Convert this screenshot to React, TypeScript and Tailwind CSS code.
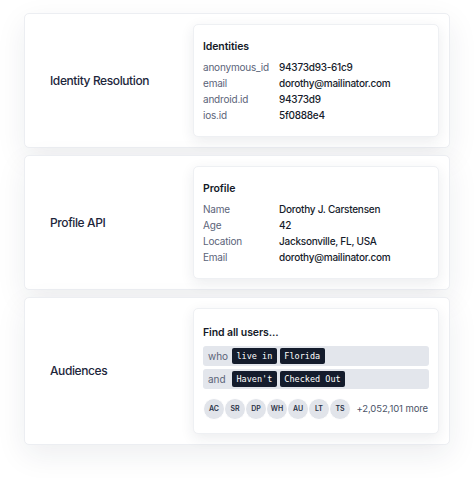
import React from "react";

const font = { fontFamily: "Inter, 'Liberation Sans', sans-serif" };
const mono = { fontFamily: "'DejaVu Sans Mono', 'Liberation Mono', monospace" };

function Row({ k, v }: { k: string; v: string }) {
  return (
    <div className="flex h-[16px] items-center">
      <span className="w-[76px] shrink-0 text-[10px] tracking-[-0.2px] text-[#5b6479]">{k}</span>
      <span className="text-[10px] font-medium tracking-[-0.25px] text-[#161c2b]">{v}</span>
    </div>
  );
}

function Outer({ label, children }: { label: string; children: React.ReactNode }) {
  return (
    <div className="flex items-stretch rounded-[5px] border border-[#eceef2] bg-white py-[10px] pr-[10px] shadow-[0_10px_30px_rgba(30,40,70,0.08)]">
      <div className="flex w-[168px] shrink-0 items-center pl-[25px] text-[12px] font-medium tracking-[-0.4px] text-[#1d263b]">
        {label}
      </div>
      <div className="flex-1 rounded-[5px] border border-[#eef0f3] bg-white px-[9px] pt-[14px] pb-[13px] shadow-[0_4px_14px_rgba(30,40,70,0.09)]">
        {children}
      </div>
    </div>
  );
}

function Tag({ t }: { t: string }) {
  return (
    <span
      className="flex h-[16px] items-center rounded-[2px] bg-[#141c2c] px-[4.5px] text-[8.5px] text-white"
      style={mono}
    >
      {t}
    </span>
  );
}

export default function App() {
  return (
    <div className="h-[478px] w-[474px] bg-white px-[24px] pt-[13px]" style={font}>
      <div className="flex flex-col gap-[7px]">
        <Outer label="Identity Resolution">
          <div className="mb-[4px] flex h-[16px] items-center text-[10.5px] font-semibold tracking-[-0.1px] text-[#141a28]">
            Identities
          </div>
          <Row k="anonymous_id" v="94373d93-61c9" />
          <Row k="email" v="dorothy@mailinator.com" />
          <Row k="android.id" v="94373d9" />
          <Row k="ios.id" v="5f0888e4" />
        </Outer>
        <Outer label="Profile API">
          <div className="mb-[4px] flex h-[16px] items-center text-[10.5px] font-semibold tracking-[-0.1px] text-[#141a28]">
            Profile
          </div>
          <Row k="Name" v="Dorothy J. Carstensen" />
          <Row k="Age" v="42" />
          <Row k="Location" v="Jacksonville, FL, USA" />
          <Row k="Email" v="dorothy@mailinator.com" />
        </Outer>
        <Outer label="Audiences">
          <div className="mb-[5px] mt-[2px] flex h-[16px] items-center text-[10.5px] font-semibold tracking-[-0.1px] text-[#141a28]">
            Find all users...
          </div>
          <div className="flex flex-col gap-[3px]">
            <div className="flex h-[20px] items-center gap-[3px] rounded-[3px] bg-[#e3e6ec] pl-[5px]">
              <span className="w-[21px] shrink-0 text-[10px] text-[#5b6479]">who</span>
              <Tag t="live in" />
              <Tag t="Florida" />
            </div>
            <div className="flex h-[20px] items-center gap-[3px] rounded-[3px] bg-[#e3e6ec] pl-[5px]">
              <span className="w-[21px] shrink-0 text-[10px] text-[#5b6479]">and</span>
              <Tag t="Haven't" />
              <Tag t="Checked Out" />
            </div>
          </div>
          <div className="mt-[9px] flex items-center justify-between pr-[1px]">
            <div className="flex">
              {["AC", "SR", "DP", "WH", "AU", "LT", "TS"].map((s, i) => (
                <span
                  key={s}
                  className={`flex h-[22px] w-[22px] items-center justify-center rounded-full border border-white bg-[#e1e4ea] text-[7px] font-semibold text-[#2a3247] ${i > 0 ? "-ml-[1px]" : ""}`}
                >
                  {s}
                </span>
              ))}
            </div>
            <span className="text-[9.5px] tracking-[-0.1px] text-[#4b5468]">+2,052,101 more</span>
          </div>
        </Outer>
      </div>
    </div>
  );
}
